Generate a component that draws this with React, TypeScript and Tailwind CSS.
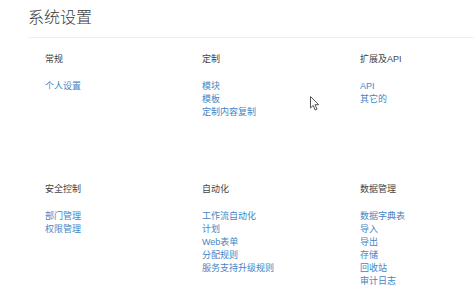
const sections = [
  { title: "常规", links: ["个人设置"] },
  { title: "定制", links: ["模块", "模板", "定制内容复制"] },
  { title: "扩展及API", links: ["API", "其它的"] },
  { title: "安全控制", links: ["部门管理", "权限管理"] },
  { title: "自动化", links: ["工作流自动化", "计划", "Web表单", "分配规则", "服务支持升级规则"] },
  { title: "数据管理", links: ["数据字典表", "导入", "导出", "存储", "回收站", "审计日志"] },
];

const App = () => {
  return (
    <div
      className="relative w-[474px] h-[295px] bg-white overflow-hidden"
      style={{ fontFamily: '"Liberation Sans", "Noto Sans CJK SC", sans-serif' }}
    >
      {/* Header */}
      <div className="pl-[28px] pt-[8px]">
        <h1 className="text-[16px] leading-[20px] text-[#3a3a3a] font-light">系统设置</h1>
      </div>
      <div className="ml-[28px] mt-[9px] h-px bg-[#f0f0f0]" />

      <main className="pl-[45px] pt-[15px] grid grid-cols-[157px_158px_1fr] auto-rows-[130px]">
        {sections.map((section) => (
          <section key={section.title}>
            <h2 className="text-[9px] leading-[13px] text-[#444444] mb-[14px]">{section.title}</h2>
            <ul>
              {section.links.map((link) => (
                <li key={link} className="text-[9px] leading-[13px] text-[#4585c6]">
                  {link}
                </li>
              ))}
            </ul>
          </section>
        ))}
      </main>

      {/* Mouse cursor */}
      <svg className="absolute left-[310px] top-[96px]" width="10" height="15" viewBox="0 0 10 15">
        <path d="M0.5 0.5 L0.5 12 L3.2 9.4 L5.2 14 L7 13.2 L5 8.7 L8.8 8.7 Z" fill="#ffffff" stroke="#555555" strokeWidth="1" strokeLinejoin="round" />
      </svg>
    </div>
  );
};

export default App;
